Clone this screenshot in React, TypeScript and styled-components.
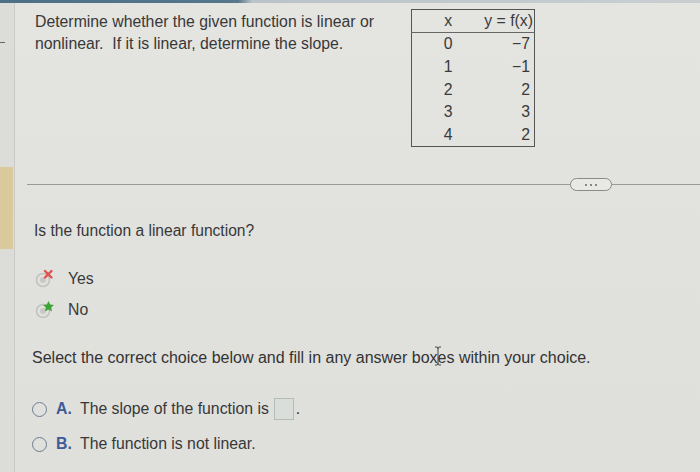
import React from 'react';
import styled, { createGlobalStyle } from 'styled-components';

const GlobalStyle = createGlobalStyle`
  html, body {
    margin: 0;
    padding: 0;
    background: #e2e2df;
  }
  body {
    font-family: 'Liberation Sans', Arial, sans-serif;
    color: #353535;
  }
`;

const Screen = styled.div`
  position: relative;
  width: 700px;
  height: 472px;
  overflow: hidden;
  display: flex;
  background: linear-gradient(180deg, #e4e4e1 0%, #e1e1de 55%, #dfdfdc 100%);
`;

const TopBar = styled.div`
  position: absolute;
  top: 0;
  left: 0;
  right: 0;
  height: 3px;
  background: linear-gradient(90deg, #4f6f86 0%, #56768c 34%, #b9c3c8 36%, #c9cfd1 100%);
`;

const Sidebar = styled.aside`
  width: 14px;
  flex: 0 0 14px;
  border-right: 1px solid #c9c9c6;
  background: #dcdcd9;
  display: flex;
  flex-direction: column;
  padding-top: 42px;
`;

const Dash = styled.div`
  width: 5px;
  height: 1px;
  background: #666;
`;

const Marker = styled.div`
  margin-top: 124px;
  height: 82px;
  width: 13px;
  background: #d9c99b;
`;

const Main = styled.main`
  flex: 1;
  display: flex;
  flex-direction: column;
  padding-left: 20px;
`;

const TopSection = styled.section`
  display: flex;
  align-items: flex-start;
  height: 178px;
`;

const Prompt = styled.p`
  margin: 11px 0 0;
  width: 376px;
  font-size: 15.8px;
  line-height: 22px;
  color: #383838;
`;

const Table = styled.table`
  margin-top: 9px;
  border-collapse: collapse;
  border: 1.5px solid #555;
  font-size: 15.8px;
  color: #3a3a3a;
  width: 124px;
`;

const HeadCell = styled.th<{ $align: 'center' | 'right' }>`
  font-weight: normal;
  text-align: ${(p) => p.$align};
  height: 22px;
  padding: 0 ${(p) => (p.$align === 'right' ? '1px' : '0')} 0 0;
  border-bottom: 1.5px solid #666;
  white-space: nowrap;
`;

const Cell = styled.td<{ $align: 'center' | 'right' }>`
  text-align: ${(p) => p.$align};
  height: 22.7px;
  padding: 0 ${(p) => (p.$align === 'right' ? '4px' : '0')} 0 0;
  width: ${(p) => (p.$align === 'center' ? '74px' : 'auto')};
`;

const DividerRow = styled.div`
  display: flex;
  align-items: center;
  margin-left: -8px;
  margin-right: -2px;
`;

const Rule = styled.div<{ $grow: number }>`
  flex: ${(p) => p.$grow};
  height: 1px;
  background: #9a9a98;
`;

const MorePill = styled.button`
  width: 42px;
  height: 13px;
  padding: 0;
  border: 1px solid #8a8a88;
  border-radius: 7px;
  background: #e8e8e5;
  display: flex;
  align-items: center;
  justify-content: center;
  gap: 3px;
`;

const Dot = styled.span`
  width: 2px;
  height: 2px;
  border-radius: 50%;
  background: #666;
`;

const Question = styled.p`
  margin: 31px 0 0 -1px;
  font-size: 15.6px;
  color: #383838;
`;

const ChoiceList = styled.div`
  margin-top: 29px;
  display: flex;
  flex-direction: column;
  gap: 12px;
`;

const Choice = styled.div`
  display: flex;
  align-items: center;
  height: 19px;
  gap: 13px;
  font-size: 15.8px;
  color: #3a3a3a;
`;

const Instruction = styled.p`
  margin: 30px 0 0 -3px;
  font-size: 16px;
  color: #333;
`;

const CursorWord = styled.span`
  position: relative;
`;

const Cursor = styled.svg`
  position: absolute;
  left: 22px;
  top: -3px;
`;

const Options = styled.div`
  margin-top: 31px;
  margin-left: -3px;
  display: flex;
  flex-direction: column;
  gap: 13px;
`;

const Option = styled.div`
  display: flex;
  align-items: center;
  height: 22px;
  font-size: 15.8px;
  color: #383838;
`;

const Radio = styled.span`
  width: 13px;
  height: 13px;
  border: 1.6px solid #6e7e92;
  border-radius: 50%;
  margin-right: 9px;
`;

const Letter = styled.span`
  font-weight: bold;
  color: #3e5b97;
  width: 24px;
`;

const AnswerBox = styled.span`
  display: inline-block;
  width: 18px;
  height: 20px;
  margin: 0 2px 0 5px;
  border: 1px solid #b4bcb8;
  background: #d9dedb;
  vertical-align: middle;
`;

function MarkIcon({ kind }: { kind: 'wrong' | 'right' }) {
  return (
    <svg width="20" height="19" viewBox="0 0 20 19">
      <circle cx="8" cy="11" r="6.5" fill="none" stroke="#c2c2c0" strokeWidth="1.6" />
      <circle cx="8" cy="11" r="3" fill="#c8c8c6" />
      {kind === 'wrong' ? (
        <g stroke="#e0524e" strokeWidth="2.4" strokeLinecap="round">
          <path d="M10 2 L16.5 8.5" />
          <path d="M16.5 2 L10 8.5" />
        </g>
      ) : (
        <path
          d="M13.5 1 L15.2 4.6 L19 5 L16.2 7.6 L17 11.4 L13.5 9.5 L10 11.4 L10.8 7.6 L8 5 L11.8 4.6 Z"
          fill="#3aa535"
        />
      )}
    </svg>
  );
}

const rows = [
  ['0', '\u22127'],
  ['1', '\u22121'],
  ['2', '2'],
  ['3', '3'],
  ['4', '2'],
];

export default function App() {
  return (
    <>
      <GlobalStyle />
      <Screen>
        <TopBar />
        <Sidebar>
          <Dash />
          <Marker />
        </Sidebar>
        <Main>
          <TopSection>
            <Prompt>
              Determine whether the given function is linear or nonlinear.&nbsp; If it is linear,
              determine the slope.
            </Prompt>
            <Table>
              <thead>
                <tr>
                  <HeadCell $align="center">x</HeadCell>
                  <HeadCell $align="right">y = f(x)</HeadCell>
                </tr>
              </thead>
              <tbody>
                {rows.map(([x, y]) => (
                  <tr key={x}>
                    <Cell $align="center">{x}</Cell>
                    <Cell $align="right">{y}</Cell>
                  </tr>
                ))}
              </tbody>
            </Table>
          </TopSection>

          <DividerRow>
            <Rule $grow={542} />
            <MorePill type="button" aria-label="more">
              <Dot />
              <Dot />
              <Dot />
            </MorePill>
            <Rule $grow={90} />
          </DividerRow>

          <Question>Is the function a linear function?</Question>

          <ChoiceList>
            <Choice>
              <MarkIcon kind="wrong" />
              <span>Yes</span>
            </Choice>
            <Choice>
              <MarkIcon kind="right" />
              <span>No</span>
            </Choice>
          </ChoiceList>

          <Instruction>
            Select the correct choice below and fill in any answer{' '}
            <CursorWord>
              boxes
              <Cursor width="8" height="20" viewBox="0 0 8 20">
                <path
                  d="M1 1 H3 Q4 1 4 3 V17 Q4 19 3 19 H1 M7 1 H5 Q4 1 4 3 M4 17 Q4 19 5 19 H7"
                  fill="none"
                  stroke="#444"
                  strokeWidth="1"
                />
              </Cursor>
            </CursorWord>{' '}
            within your choice.
          </Instruction>

          <Options>
            <Option>
              <Radio />
              <Letter>A.</Letter>
              <span>The slope of the function is</span>
              <AnswerBox />
              <span>.</span>
            </Option>
            <Option>
              <Radio />
              <Letter>B.</Letter>
              <span>The function is not linear.</span>
            </Option>
          </Options>
        </Main>
      </Screen>
    </>
  );
}
